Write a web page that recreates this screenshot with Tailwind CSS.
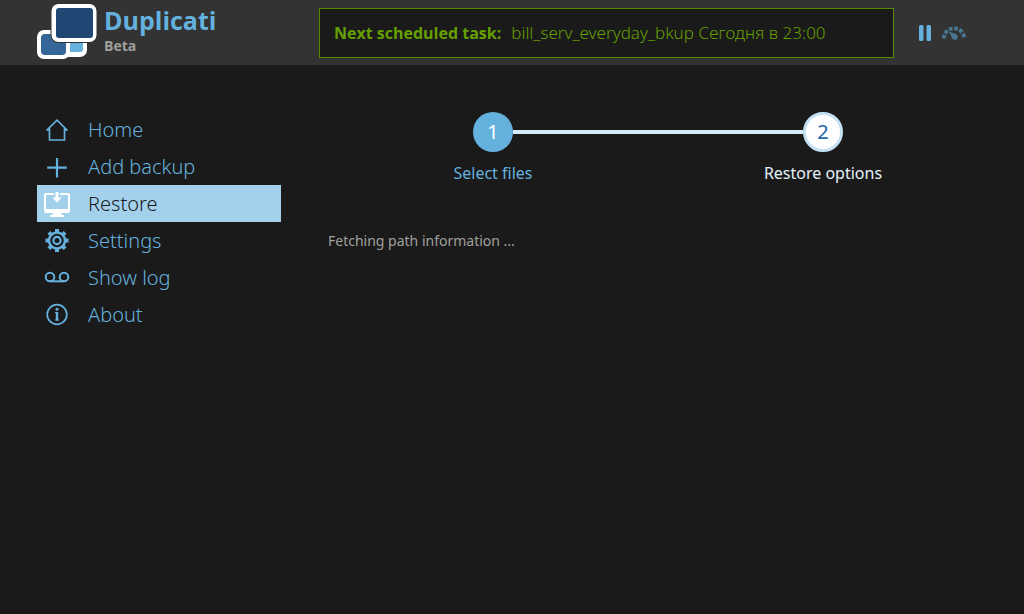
<!DOCTYPE html>
<html lang="en">
<head>
<meta charset="utf-8">
<meta name="viewport" content="width=device-width, initial-scale=1">
<title>Duplicati</title>
<script src="https://cdn.jsdelivr.net/npm/@tailwindcss/browser@4"></script>
</head>
<body class="min-h-screen bg-[#1a1a1a] font-['Noto_Sans','Open_Sans',sans-serif] text-[#a0a09c]">
<header class="flex h-[65px] items-center bg-[#333333] px-9">
  <a href="#" class="flex w-[283px] shrink-0 items-start gap-[7px] font-['Open_Sans','Noto_Sans',sans-serif]">
    <svg class="h-[58px] w-[61px] shrink-0" viewBox="0 0 61 58" aria-hidden="true">
      <rect x="17" y="24" width="34" height="29" rx="7" fill="#fff"/>
      <rect x="22" y="29" width="25" height="19" rx="3" fill="#65b1de"/>
      <rect x="1" y="26" width="33" height="29" rx="7" fill="#fff"/>
      <rect x="5" y="30" width="25" height="21" rx="4" fill="#346698"/>
      <rect x="14.500" y="0" width="47" height="39" rx="8" fill="#333"/>
      <rect x="15.500" y="0" width="45" height="38" rx="7" fill="#fff"/>
      <rect x="20" y="4" width="37" height="30" rx="3" fill="#1f4774"/>
    </svg>
    <span class="flex flex-col">
      <span class="text-[25px] leading-8 font-bold text-[#65b1de]">Duplicati</span>
      <span class="text-sm leading-5 font-bold">Beta</span>
    </span>
  </a>
  <div class="flex h-[50px] min-w-0 max-w-[575px] flex-1 items-center gap-2.5 border border-[#558a00] bg-[#1a1a1a] px-3.5 whitespace-nowrap text-[#669f00]">
    <strong class="font-['Open_Sans','Noto_Sans',sans-serif] text-base font-bold">Next scheduled task:</strong>
    <span class="text-[17px] font-light">bill_serv_everyday_bkup Сегодня в 23:00</span>
  </div>
  <div class="ml-6 flex items-center gap-2">
    <button type="button" aria-label="Pause" class="block">
      <svg class="h-[18px] w-[15px]" viewBox="0 0 15 18" fill="#65b1de"><rect x="1" y="1" width="4.500" height="16" rx="1.500"/><rect x="8.500" y="1" width="4.500" height="16" rx="1.500"/></svg>
    </button>
    <button type="button" aria-label="Throttle" class="block">
      <svg class="h-[16px] w-[26px]" viewBox="0 0 26 16"><path d="M2.800 13.500A10.200 10.200 0 0 1 23.200 13.500" fill="none" stroke="#497590" stroke-width="4" stroke-dasharray="3.700 1.650"/><path d="M8 6.500L14.500 9A3 3 0 1 1 11 13Z" fill="#497590"/></svg>
    </button>
  </div>
</header>
<div class="flex px-9 pt-[46px]">
  <nav class="ml-px w-[244px] shrink-0 text-xl font-light text-[#65b1de]">
    <ul>
      <li><a href="#" class="flex h-[37px] items-center gap-[18px] pl-[7px]">
        <svg class="h-[26px] w-[26px]" viewBox="0 0 26 26" fill="none" stroke="#65b1de" stroke-width="1.700"><path d="M2.500 13.500L13 3.200L23.500 13.500M5.500 11.500V23H20.500V11.500M2.500 13H6M20 13H23.500"/></svg>Home</a></li>
      <li><a href="#" class="flex h-[37px] items-center gap-[18px] pl-[7px]">
        <svg class="h-[26px] w-[26px]" viewBox="0 0 26 26" fill="none" stroke="#65b1de" stroke-width="2.200"><path d="M13 4V23.500M3.200 13.700H22.800"/></svg>Add backup</a></li>
      <li><a href="#" aria-current="page" class="flex h-[37px] items-center gap-[18px] bg-[#a3d1ec] pl-[7px] text-[#1a1a1a]">
        <svg class="h-[26px] w-[26px]" viewBox="0 0 26 26" fill="#fff"><path d="M2 2H10V4H2V18H24V4H16V2H24A2 2 0 0 1 26 4V20A2 2 0 0 1 24 22H17L18 24H20V26H6V24H8L9 22H2A2 2 0 0 1 0 20V4A2 2 0 0 1 2 2Z"/><path d="M11.500 1H14.500V6.500H17.500L13 11.500L8.500 6.500H11.500Z"/></svg>Restore</a></li>
      <li><a href="#" class="flex h-[37px] items-center gap-[18px] pl-[7px]">
        <svg class="h-[26px] w-[26px]" viewBox="0 0 26 26" fill="none" stroke="#65b1de"><circle cx="13" cy="12.500" r="8" stroke-width="2.500"/><circle cx="13" cy="12.500" r="3.600" stroke-width="2.200"/><path d="M13 1V4.500M13 20.500V24M1.500 12.500H5M21 12.500H24.500M4.900 4.400L7.300 6.800M18.700 18.200L21.100 20.600M4.900 20.600L7.300 18.200M18.700 6.800L21.100 4.400" stroke-width="4"/></svg>Settings</a></li>
      <li><a href="#" class="flex h-[37px] items-center gap-[18px] pl-[7px]">
        <svg class="h-[26px] w-[26px]" viewBox="0 0 26 26" fill="none" stroke="#65b1de" stroke-width="2"><circle cx="6" cy="12" r="4.300"/><circle cx="20" cy="12" r="4.300"/><path d="M6 16.300H20"/></svg>Show log</a></li>
      <li><a href="#" class="flex h-[37px] items-center gap-[18px] pl-[7px]">
        <svg class="h-[26px] w-[26px]" viewBox="0 0 26 26" fill="none" stroke="#65b1de"><circle cx="13" cy="12.500" r="9.800" stroke-width="1.700"/><path d="M13 10V18.500" stroke-width="2.400"/><path d="M11 10.500H13M11 18H15" stroke-width="1.200"/><circle cx="13" cy="7.300" r="1.500" fill="#65b1de" stroke="none"/></svg>About</a></li>
    </ul>
  </nav>
  <main class="ml-[47px] min-w-0 flex-1 pt-px">
    <ol class="grid grid-cols-2 text-center text-base">
      <li class="text-[#65b1de]">
        <div class="flex items-center">
          <span class="flex-1"></span>
          <span class="flex h-10 w-10 items-center justify-center rounded-full bg-[#65b1de] text-xl text-white">1</span>
          <span class="h-1 flex-1 bg-[#d5ebf7]"></span>
        </div>
        <p class="mt-[9px]">Select files</p>
      </li>
      <li class="text-[#e4f2fa]">
        <div class="flex items-center">
          <span class="h-1 flex-1 bg-[#d5ebf7]"></span>
          <span class="flex h-10 w-10 items-center justify-center rounded-full border-3 border-[#c5e2f4] bg-white text-xl text-[#2066a8]">2</span>
          <span class="flex-1"></span>
        </div>
        <p class="mt-[9px]">Restore options</p>
      </li>
    </ol>
    <p class="mt-[46px] text-sm">Fetching path information ...</p>
  </main>
</div>
</body>
</html>
